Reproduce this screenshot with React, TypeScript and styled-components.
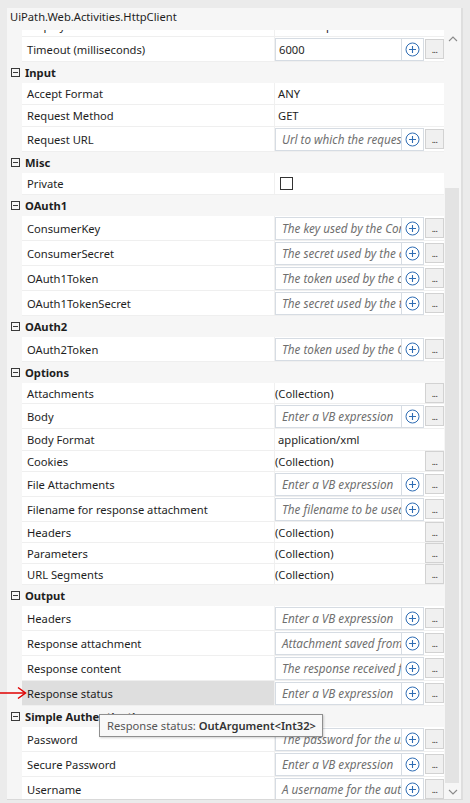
import React from 'react';
import styled, { createGlobalStyle } from 'styled-components';

const GlobalStyle = createGlobalStyle`
  html, body { margin: 0; padding: 0; }
  body {
    width: 470px;
    height: 803px;
    overflow: hidden;
    background: #ebebeb;
    font-family: "Segoe UI", "Noto Sans", "Open Sans", sans-serif;
    font-size: 11.2px;
    color: #1e1e1e;
  }
`;

type Value =
  | { kind: 'text'; text: string }
  | { kind: 'input'; placeholder?: string; value?: string }
  | { kind: 'collection' }
  | { kind: 'checkbox' };

type Prop = { label: string; value: Value; highlight?: boolean };
type Category = { title: string; props: Prop[] };

const leading: Prop[] = [
  { label: 'DisplayName', value: { kind: 'text', text: 'HTTP Request' } },
  { label: 'Timeout (milliseconds)', value: { kind: 'input', value: '6000' } },
];

const vb = 'Enter a VB expression';

const categories: Category[] = [
  {
    title: 'Input',
    props: [
      { label: 'Accept Format', value: { kind: 'text', text: 'ANY' } },
      { label: 'Request Method', value: { kind: 'text', text: 'GET' } },
      { label: 'Request URL', value: { kind: 'input', placeholder: 'Url to which the request will be sent' } },
    ],
  },
  { title: 'Misc', props: [{ label: 'Private', value: { kind: 'checkbox' } }] },
  {
    title: 'OAuth1',
    props: [
      { label: 'ConsumerKey', value: { kind: 'input', placeholder: 'The key used by the Consumer to identify itself' } },
      { label: 'ConsumerSecret', value: { kind: 'input', placeholder: 'The secret used by the consumer' } },
      { label: 'OAuth1Token', value: { kind: 'input', placeholder: 'The token used by the consumer' } },
      { label: 'OAuth1TokenSecret', value: { kind: 'input', placeholder: 'The secret used by the token' } },
    ],
  },
  {
    title: 'OAuth2',
    props: [{ label: 'OAuth2Token', value: { kind: 'input', placeholder: 'The token used by the OAuth2 flow' } }],
  },
  {
    title: 'Options',
    props: [
      { label: 'Attachments', value: { kind: 'collection' } },
      { label: 'Body', value: { kind: 'input', placeholder: vb } },
      { label: 'Body Format', value: { kind: 'text', text: 'application/xml' } },
      { label: 'Cookies', value: { kind: 'collection' } },
      { label: 'File Attachments', value: { kind: 'input', placeholder: vb } },
      { label: 'Filename for response attachment', value: { kind: 'input', placeholder: 'The filename to be used' } },
      { label: 'Headers', value: { kind: 'collection' } },
      { label: 'Parameters', value: { kind: 'collection' } },
      { label: 'URL Segments', value: { kind: 'collection' } },
    ],
  },
  {
    title: 'Output',
    props: [
      { label: 'Headers', value: { kind: 'input', placeholder: vb } },
      { label: 'Response attachment', value: { kind: 'input', placeholder: 'Attachment saved from the response' } },
      { label: 'Response content', value: { kind: 'input', placeholder: 'The response received from the server' } },
      { label: 'Response status', value: { kind: 'input', placeholder: vb }, highlight: true },
    ],
  },
  {
    title: 'Simple Authentication',
    props: [
      { label: 'Password', value: { kind: 'input', placeholder: 'The password for the user' } },
      { label: 'Secure Password', value: { kind: 'input', placeholder: vb } },
      { label: 'Username', value: { kind: 'input', placeholder: 'A username for the authentication' } },
    ],
  },
];

const rowHeight = (v: Value) => {
  switch (v.kind) {
    case 'input':
      return 25;
    case 'collection':
      return 21;
    default:
      return 22;
  }
};

const Page = styled.div`
  position: relative;
  width: 470px;
  height: 803px;
  box-sizing: border-box;
  padding: 8px 7px 3px 7px;
  background: #ebebeb;
`;

const Panel = styled.div`
  display: flex;
  flex-direction: column;
  height: 100%;
  box-sizing: border-box;
  background: #f6f6f6;
  border-right: 2px solid #dedede;
  border-bottom: 1px solid #d9d9d9;
`;

const Header = styled.div`
  height: 22px;
  line-height: 17px;
  padding-left: 3px;
  color: #1e1e1e;
  white-space: nowrap;
`;

const Body = styled.div`
  flex: 1;
  min-height: 0;
  display: flex;
`;

const List = styled.div`
  flex: 1;
  min-width: 0;
  overflow: hidden;
`;

const ListContent = styled.div<{ $offset: number }>`
  margin-top: ${(p) => -p.$offset}px;
`;

const CategoryRow = styled.div`
  display: flex;
  align-items: center;
  height: 21px;
  padding-left: 4px;
  font-weight: 700;
  white-space: nowrap;
`;

const MinusBox = styled.span`
  position: relative;
  width: 9px;
  height: 9px;
  box-sizing: border-box;
  border: 1px solid #3a3a3a;
  margin-right: 5px;
  flex: none;
  &::after {
    content: '';
    position: absolute;
    left: 1px;
    right: 1px;
    top: 3px;
    height: 1px;
    background: #3a3a3a;
  }
`;

const PropRow = styled.div<{ $h: number }>`
  display: flex;
  height: ${(p) => p.$h}px;
  margin-left: 15px;
  box-sizing: border-box;
  border-bottom: 1px solid #efefef;
`;

const Label = styled.div<{ $highlight?: boolean }>`
  width: 253px;
  flex: none;
  box-sizing: border-box;
  padding-left: 5px;
  display: flex;
  align-items: center;
  background: ${(p) => (p.$highlight ? '#dedede' : '#ffffff')};
  border-right: 1px solid #f0f0f0;
  white-space: nowrap;
  overflow: hidden;
`;

const ValueCell = styled.div`
  flex: 1;
  min-width: 0;
  display: flex;
  align-items: center;
  background: #ffffff;
`;

const PlainText = styled.span<{ $pad: number }>`
  padding-left: ${(p) => p.$pad}px;
  white-space: nowrap;
  flex: 1;
`;

const InputBox = styled.div`
  width: 149px;
  height: 23px;
  box-sizing: border-box;
  border: 1px solid #d6dce3;
  display: flex;
  flex: none;
  background: #ffffff;
`;

const InputText = styled.div<{ $placeholder: boolean }>`
  flex: 1;
  min-width: 0;
  overflow: hidden;
  white-space: nowrap;
  display: flex;
  align-items: center;
  font-style: ${(p) => (p.$placeholder ? 'italic' : 'normal')};
  font-size: ${(p) => (p.$placeholder ? '11.7px' : '11.2px')};
  color: ${(p) => (p.$placeholder ? '#6f6f6f' : '#1e1e1e')};
  padding-left: ${(p) => (p.$placeholder ? 6 : 3)}px;
`;

const PlusCell = styled.div`
  width: 21px;
  flex: none;
  border-left: 1px solid #d6dce3;
  display: flex;
  align-items: center;
  justify-content: center;
`;

const EllipsisButton = styled.div`
  width: 19px;
  height: 20px;
  box-sizing: border-box;
  margin-left: 1px;
  flex: none;
  background: #f0f0f0;
  border: 1px solid #d2d2d2;
  display: flex;
  align-items: flex-end;
  justify-content: center;
  padding-bottom: 4px;
  font-size: 9px;
  line-height: 9px;
  color: #222;
  letter-spacing: -0.5px;
`;

const CheckBox = styled.span`
  width: 13px;
  height: 13px;
  box-sizing: border-box;
  margin-left: 5px;
  border: 1px solid #333333;
  background: #ffffff;
`;

const ScrollBar = styled.div`
  width: 17px;
  flex: none;
  display: flex;
  flex-direction: column;
  align-items: center;
`;

const ArrowArea = styled.div<{ $h: number }>`
  height: ${(p) => p.$h}px;
  flex: none;
  display: flex;
  align-items: center;
  justify-content: center;
  width: 100%;
`;

const Track = styled.div`
  flex: 1;
  width: 100%;
  display: flex;
  flex-direction: column;
`;

const Thumb = styled.div`
  margin-left: 1px;
  width: 14px;
  background: #e3e3e3;
`;

const Tooltip = styled.div`
  position: absolute;
  left: 99px;
  top: 714px;
  width: 224px;
  height: 23px;
  box-sizing: border-box;
  border: 1px solid #8f8f8f;
  background: #f8f8f8;
  box-shadow: 1px 1px 2px rgba(0, 0, 0, 0.18);
  padding-left: 7px;
  display: flex;
  align-items: center;
  color: #555555;
  white-space: nowrap;
`;

const TipType = styled.span`
  font-weight: 600;
  color: #333333;
`;

const Annotation = styled.svg`
  position: absolute;
  left: 0;
  top: 686px;
`;

const PlusIcon = () => (
  <svg width="15" height="15" viewBox="0 0 15 15">
    <circle cx="7.5" cy="7.5" r="6.5" fill="none" stroke="#2f6db4" strokeWidth="1" />
    <path d="M7.5 4v7M4 7.5h7" stroke="#2f6db4" strokeWidth="1.1" />
  </svg>
);

const Chevron = ({ up }: { up?: boolean }) => (
  <svg width="10" height="6" viewBox="0 0 10 6">
    <polyline
      points={up ? '1,5 5,1 9,5' : '1,1 5,5 9,1'}
      fill="none"
      stroke="#8a8a8a"
      strokeWidth="1.1"
    />
  </svg>
);

const ValueView = ({ value }: { value: Value }) => {
  switch (value.kind) {
    case 'text':
      return (
        <ValueCell>
          <PlainText $pad={3}>{value.text}</PlainText>
        </ValueCell>
      );
    case 'checkbox':
      return (
        <ValueCell>
          <CheckBox />
        </ValueCell>
      );
    case 'collection':
      return (
        <ValueCell>
          <PlainText $pad={0}>(Collection)</PlainText>
          <EllipsisButton>...</EllipsisButton>
        </ValueCell>
      );
    case 'input':
      return (
        <ValueCell>
          <InputBox>
            <InputText $placeholder={!value.value}>{value.value ?? value.placeholder}</InputText>
            <PlusCell>
              <PlusIcon />
            </PlusCell>
          </InputBox>
          <EllipsisButton>...</EllipsisButton>
        </ValueCell>
      );
  }
};

const PropertyRow = ({ prop }: { prop: Prop }) => (
  <PropRow $h={rowHeight(prop.value)}>
    <Label $highlight={prop.highlight}>{prop.label}</Label>
    <ValueView value={prop.value} />
  </PropRow>
);

export default function App() {
  return (
    <>
      <GlobalStyle />
      <Page>
        <Panel>
          <Header>UiPath.Web.Activities.HttpClient</Header>
          <Body>
            <List>
              <ListContent $offset={15}>
                {leading.map((p) => (
                  <PropertyRow key={p.label} prop={p} />
                ))}
                {categories.map((c) => (
                  <React.Fragment key={c.title}>
                    <CategoryRow>
                      <MinusBox />
                      {c.title}
                    </CategoryRow>
                    {c.props.map((p) => (
                      <PropertyRow key={c.title + p.label} prop={p} />
                    ))}
                  </React.Fragment>
                ))}
              </ListContent>
            </List>
            <ScrollBar>
              <ArrowArea $h={18}>
                <Chevron up />
              </ArrowArea>
              <Track>
                <Thumb style={{ marginTop: 140, height: 595 }} />
              </Track>
              <ArrowArea $h={17}>
                <Chevron />
              </ArrowArea>
            </ScrollBar>
          </Body>
        </Panel>
        <Tooltip>
          Response status:&nbsp;<TipType>OutArgument&lt;Int32&gt;</TipType>
        </Tooltip>
        <Annotation width="28" height="14" viewBox="0 0 28 14">
          <path d="M0 7h25" stroke="#e00000" strokeWidth="1.5" />
          <polyline points="18,1.5 25.5,7 18,12.5" fill="none" stroke="#e00000" strokeWidth="1.5" />
        </Annotation>
      </Page>
    </>
  );
}
